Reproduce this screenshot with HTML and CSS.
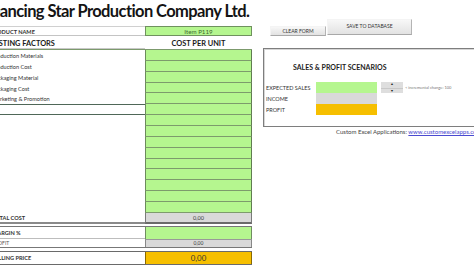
FILE: index.html
```html
<!DOCTYPE html>
<html>
<head>
<meta charset="utf-8">
<link rel="stylesheet" href="styles.css">
</head>
<body>
<div class="title">Dancing Star Production Company Ltd.</div>
<div class="main">
  <div class="form">
    <div class="row product">
      <div class="lbl bold">PRODUCT NAME</div>
      <div class="val green">Item P119</div>
    </div>
    <div class="row header">
      <div class="lbl">COSTING FACTORS</div>
      <div class="val plain">COST PER UNIT</div>
    </div>
    <div class="items">
      <div class="row item"><div class="lbl">Production Materials</div><div class="val green"></div></div>
      <div class="row item"><div class="lbl">Production Cost</div><div class="val green"></div></div>
      <div class="row item"><div class="lbl">Packaging Material</div><div class="val green"></div></div>
      <div class="row item"><div class="lbl">Packaging Cost</div><div class="val green"></div></div>
      <div class="row item"><div class="lbl">Marketing &amp; Promotion</div><div class="val green"></div></div>
      <div class="row item boxed"><div class="lbl"></div><div class="val green"></div></div>
      <div class="row item"><div class="lbl"></div><div class="val green"></div></div>
      <div class="row item"><div class="lbl"></div><div class="val green"></div></div>
      <div class="row item"><div class="lbl"></div><div class="val green"></div></div>
      <div class="row item"><div class="lbl"></div><div class="val green"></div></div>
      <div class="row item"><div class="lbl"></div><div class="val green"></div></div>
      <div class="row item"><div class="lbl"></div><div class="val green"></div></div>
      <div class="row item"><div class="lbl"></div><div class="val green"></div></div>
      <div class="row item"><div class="lbl"></div><div class="val green"></div></div>
      <div class="row item"><div class="lbl"></div><div class="val green"></div></div>
    </div>
    <div class="row total">
      <div class="lbl bold">TOTAL COST</div>
      <div class="val gray">0,00</div>
    </div>
    <div class="block">
      <div class="row margin">
        <div class="lbl bold">MARGIN %</div>
        <div class="val green"></div>
      </div>
      <div class="row profit">
        <div class="lbl">PROFIT</div>
        <div class="val gray">0,00</div>
      </div>
    </div>
    <div class="row selling">
      <div class="lbl bold">SELLING PRICE</div>
      <div class="val gold">0,00</div>
    </div>
  </div>
  <div class="side">
    <div class="buttons">
      <div class="btn clear">CLEAR FORM</div>
      <div class="btn save">SAVE TO DATABASE</div>
    </div>
    <div class="panel">
      <div class="panel-title">SALES &amp; PROFIT SCENARIOS</div>
      <div class="scen">
        <div class="srow">
          <div class="slbl">EXPECTED SALES</div>
          <div class="sval green"></div>
          <div class="spin"><div class="half">&#9650;</div><div class="half">&#9660;</div></div>
          <div class="note">&lt; incremental change: 100</div>
        </div>
        <div class="srow">
          <div class="slbl">INCOME</div>
          <div class="sval gray"></div>
        </div>
        <div class="srow">
          <div class="slbl">PROFIT</div>
          <div class="sval gold"></div>
        </div>
      </div>
    </div>
    <div class="credit">Custom Excel Applications: <span class="link">www.customexcelapps.com</span></div>
  </div>
</div>
</body>
</html>
```

FILE: styles.css
```css
* { box-sizing: border-box; }
html, body {
  margin: 0;
  padding: 0;
  width: 474px;
  height: 266px;
  overflow: hidden;
  background: #ffffff;
  font-family: Lato, "Liberation Sans", sans-serif;
  color: #2a2a2a;
}
.title {
  margin-left: -12px;
  height: 20px;
  line-height: 22px;
  font-size: 16.5px;
  letter-spacing: -0.6px;
  font-weight: 700;
  color: #141414;
  white-space: nowrap;
}
.main {
  display: flex;
  margin-left: -12px;
}
.form {
  width: 264px;
  padding-top: 6px;
  flex: none;
}
.row {
  display: flex;
}
.lbl {
  width: 157px;
  padding-left: 4px;
  font-size: 5.6px;
  white-space: nowrap;
  display: flex;
  align-items: center;
  color: #333;
}
.bold { font-weight: 700; }
.val {
  width: 107px;
  display: flex;
  align-items: center;
  justify-content: center;
  font-size: 6px;
  color: #3a3a3a;
}
.green { background: #b5f68f; }
.gray { background: #d9d9d9; }
.gold { background: #f6bf00; }

.product { height: 10px; }
.product .lbl {
  padding-left: 2px;
  border-top: 1px solid #d0d0d0;
  border-bottom: 1px solid #c4c4c4;
}
.product .val {
  border: 1px solid #6f915e;
  color: #3f6a2e;
  font-size: 6.2px;
}
.header { height: 13px; }
.header .lbl {
  font-size: 7.4px;
  font-weight: 700;
  color: #1a1a1a;
  border-bottom: 1px solid #c8c8c8;
  padding-top: 2px;
  padding-left: 0;
}
.header .val.plain {
  font-size: 7.4px;
  font-weight: 700;
  color: #1a1a1a;
  padding-top: 2px;
}
.items {
  border-top: 1px solid #7c9a6c;
}
.item { height: 10.87px; }
.item .val {
  border-left: 1px solid #6c8b5c;
  border-right: 1px solid #5f7d50;
  border-bottom: 1px solid #7d9b6c;
}
.boxed .lbl {
  border-top: 1px solid #4f6758;
  border-bottom: 1px solid #4f6758;
}

.total { height: 11px; }
.total .lbl {
  border-bottom: 2px solid #8a8a8a;
}
.total .val {
  border: 1px solid #7a7a7a;
  border-top: none;
  border-bottom: 2px solid #6a6a6a;
  font-size: 5.6px;
}
.block {
  margin-top: 2px;
  border-top: 1px solid #777;
  border-bottom: 1px solid #777;
}
.margin { height: 12px; }
.margin .val {
  border-left: 1px solid #6f8d60;
  border-right: 1px solid #6f8d60;
}
.margin .lbl { border-bottom: 1px solid #bdbdbd; }
.profit { height: 8px; }
.profit .lbl { font-size: 5px; color: #555; }
.profit .val {
  border-left: 1px solid #888;
  border-right: 1px solid #888;
  border-top: 1px solid #999;
  font-size: 5px;
}
.selling {
  height: 14px;
  margin-top: 3px;
  border-top: 1px solid #6a6a6a;
  border-bottom: 1px solid #6a6a6a;
}
.selling .val {
  border-left: 1px solid #8a6a00;
  border-right: 1px solid #8a6a00;
  font-size: 7.8px;
  color: #333;
}

.side {
  margin-left: 11px;
  flex: 1;
  min-width: 0;
}
.buttons {
  height: 16px;
  display: flex;
  align-items: flex-end;
  gap: 1px;
  padding-left: 7px;
}
.btn {
  display: flex;
  align-items: center;
  justify-content: center;
  font-size: 5px;
  color: #333;
  background: linear-gradient(#f7f7f7, #e2e2e2);
  border-right: 1px solid #b4b4b4;
  border-bottom: 1px solid #a8a8a8;
  border-left: 1px solid #f4f4f4;
  border-top: 1px solid #f4f4f4;
}
.clear { width: 56px; height: 10px; }
.save {
  width: 85px;
  height: 16px;
  margin-bottom: 1px;
  padding-bottom: 3px;
}
.panel {
  margin-top: 12px;
  width: 230px;
  height: 79px;
  border: 1px solid #7e7e7e;
  box-shadow: inset 1px 1px 0 #d6d6d6;
  padding-top: 14px;
  padding-left: 2px;
}
.panel-title {
  padding-left: 27px;
  font-size: 7px;
  font-weight: 700;
  color: #1e1e1e;
  height: 9px;
  line-height: 9px;
}
.scen { margin-top: 10px; }
.srow {
  display: flex;
  align-items: center;
  height: 11px;
}
.slbl {
  width: 50px;
  font-size: 5.5px;
  color: #333;
  white-space: nowrap;
}
.sval {
  width: 61px;
  height: 11px;
}
.spin {
  margin-left: 4px;
  width: 22px;
  height: 11px;
  display: flex;
  flex-direction: column;
  background: #dedede;
}
.half {
  flex: 1;
  font-size: 3.5px;
  line-height: 5.5px;
  text-align: center;
  color: #222;
}
.half + .half { border-top: 1px solid #c8c8c8; }
.note {
  margin-left: 2px;
  font-size: 4px;
  color: #777;
  white-space: nowrap;
}
.credit {
  margin-top: 1px;
  padding-left: 73px;
  font-size: 6px;
  color: #444;
  white-space: nowrap;
  height: 8px;
  line-height: 8px;
}
.link {
  color: #4a4ad0;
  text-decoration: underline;
}
```
